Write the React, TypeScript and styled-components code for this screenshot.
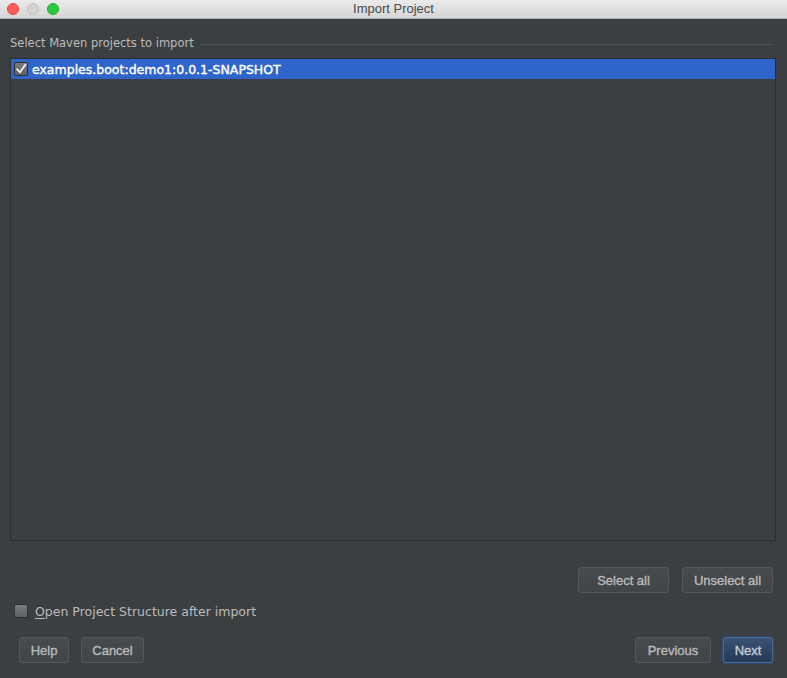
import React from "react";
import styled, { createGlobalStyle } from "styled-components";

const Global = createGlobalStyle`
  html, body { margin: 0; padding: 0; background: #3c3f41; }
  * { box-sizing: border-box; }
`;

const Window = styled.div`
  width: 787px;
  height: 678px;
  background: #3c3f41;
  display: flex;
  flex-direction: column;
  font-family: "DejaVu Sans", "Liberation Sans", sans-serif;
  overflow: hidden;
`;

const TitleBar = styled.div`
  height: 19px;
  flex: none;
  display: flex;
  align-items: center;
  position: relative;
  background: linear-gradient(#ebebeb, #d5d5d5);
  border-bottom: 1px solid #b1b1b1;
`;

const Lights = styled.div`
  display: flex;
  gap: 8px;
  padding-left: 7px;
`;

const Light = styled.span<{ $c: string; $b: string }>`
  width: 12px;
  height: 12px;
  border-radius: 50%;
  background: ${(p) => p.$c};
  border: 1px solid ${(p) => p.$b};
`;

const Title = styled.div`
  position: absolute;
  left: 0;
  right: 0;
  top: 0;
  height: 18px;
  line-height: 18px;
  text-align: center;
  font-family: "Liberation Sans", Arial, sans-serif;
  font-size: 13px;
  color: #4a4a4a;
`;

const Body = styled.div`
  flex: 1;
  display: flex;
  flex-direction: column;
  padding: 16px 11px 0 10px;
`;

const GroupHeader = styled.div`
  display: flex;
  align-items: center;
  gap: 6px;
  height: 15px;
  padding-right: 4px;
`;

const GroupLabel = styled.span`
  font-size: 11.5px;
  color: #bbbbbb;
  white-space: nowrap;
`;

const Rule = styled.div`
  flex: 1;
  height: 1px;
  background: #515557;
  margin-top: 4px;
`;

const ListBox = styled.div`
  margin-top: 8px;
  height: 483px;
  border: 1px solid #2b2d2e;
  background: #3c3f41;
`;

const Row = styled.div<{ $selected?: boolean }>`
  height: 20px;
  display: flex;
  align-items: center;
  gap: 4px;
  padding-left: 3px;
  background: ${(p) => (p.$selected ? "#2f65ca" : "transparent")};
`;

const RowText = styled.span`
  font-size: 12.5px;
  font-weight: normal;
  -webkit-text-stroke: 0.4px #ffffff;
  color: #ffffff;
  white-space: nowrap;
`;

const Box = styled.span`
  width: 14px;
  height: 14px;
  flex: none;
  border-radius: 2px;
  border: 1px solid #2e2e2e;
  background: linear-gradient(#7a7c7e, #5e6062);
  display: flex;
  align-items: center;
  justify-content: center;
`;

const ActionRow = styled.div`
  margin-top: 26px;
  display: flex;
  justify-content: flex-end;
  gap: 13px;
  padding-right: 3px;
`;

const Button = styled.button<{ $w: number; $default?: boolean }>`
  width: ${(p) => p.$w}px;
  height: 26px;
  border-radius: 3px;
  font-family: "Liberation Sans", Arial, sans-serif;
  font-size: 13px;
  font-weight: normal;
  -webkit-text-stroke: 0.35px ${(p) => (p.$default ? "#c8ced6" : "#bbbbbb")};
  color: ${(p) => (p.$default ? "#c8ced6" : "#bbbbbb")};
  border: 1px solid ${(p) => (p.$default ? "#4a6c9b" : "#55595b")};
  background: ${(p) =>
    p.$default ? "linear-gradient(#3a5273, #253a55)" : "linear-gradient(#474b4d, #414547)"};
  box-shadow: ${(p) => (p.$default ? "0 0 0 1px #2f4a6f" : "none")};
  padding: 0;
  cursor: default;
`;

const CheckRow = styled.label`
  margin-top: 10px;
  display: flex;
  align-items: center;
  gap: 7px;
  padding-left: 4px;
  height: 16px;
`;

const CheckText = styled.span`
  font-size: 12.5px;
  color: #bbbbbb;
  white-space: nowrap;
  u { text-decoration-thickness: 1px; text-underline-offset: 2px; }
`;

const Footer = styled.div`
  margin-top: 18px;
  display: flex;
  justify-content: space-between;
  align-items: center;
  padding: 0 3px 0 9px;
`;

const Group = styled.div`
  display: flex;
  gap: 12px;
  align-items: center;
`;

const Check = () => (
  <svg width="12" height="12" viewBox="0 0 12 12">
    <path d="M2 6.2 L5 9.3 L10.5 1.5" fill="none" stroke="#f2f2f2" strokeWidth="1.8" strokeLinecap="round" strokeLinejoin="round" />
  </svg>
);

export default function App() {
  return (
    <>
      <Global />
      <Window>
        <TitleBar>
          <Lights>
            <Light $c="#fc5f57" $b="#e2463f" />
            <Light $c="#d3d3d3" $b="#c2c2c2" />
            <Light $c="#2ac940" $b="#1fae2f" />
          </Lights>
          <Title>Import Project</Title>
        </TitleBar>
        <Body>
          <GroupHeader>
            <GroupLabel>Select Maven projects to import</GroupLabel>
            <Rule />
          </GroupHeader>
          <ListBox>
            <Row $selected>
              <Box>
                <Check />
              </Box>
              <RowText>examples.boot:demo1:0.0.1-SNAPSHOT</RowText>
            </Row>
          </ListBox>
          <ActionRow>
            <Button $w={91}>Select all</Button>
            <Button $w={91}>Unselect all</Button>
          </ActionRow>
          <CheckRow>
            <Box />
            <CheckText>
              <u>O</u>pen Project Structure after import
            </CheckText>
          </CheckRow>
          <Footer>
            <Group>
              <Button $w={50}>Help</Button>
              <Button $w={63}>Cancel</Button>
            </Group>
            <Group>
              <Button $w={76}>Previous</Button>
              <Button $w={50} $default>Next</Button>
            </Group>
          </Footer>
        </Body>
      </Window>
    </>
  );
}
